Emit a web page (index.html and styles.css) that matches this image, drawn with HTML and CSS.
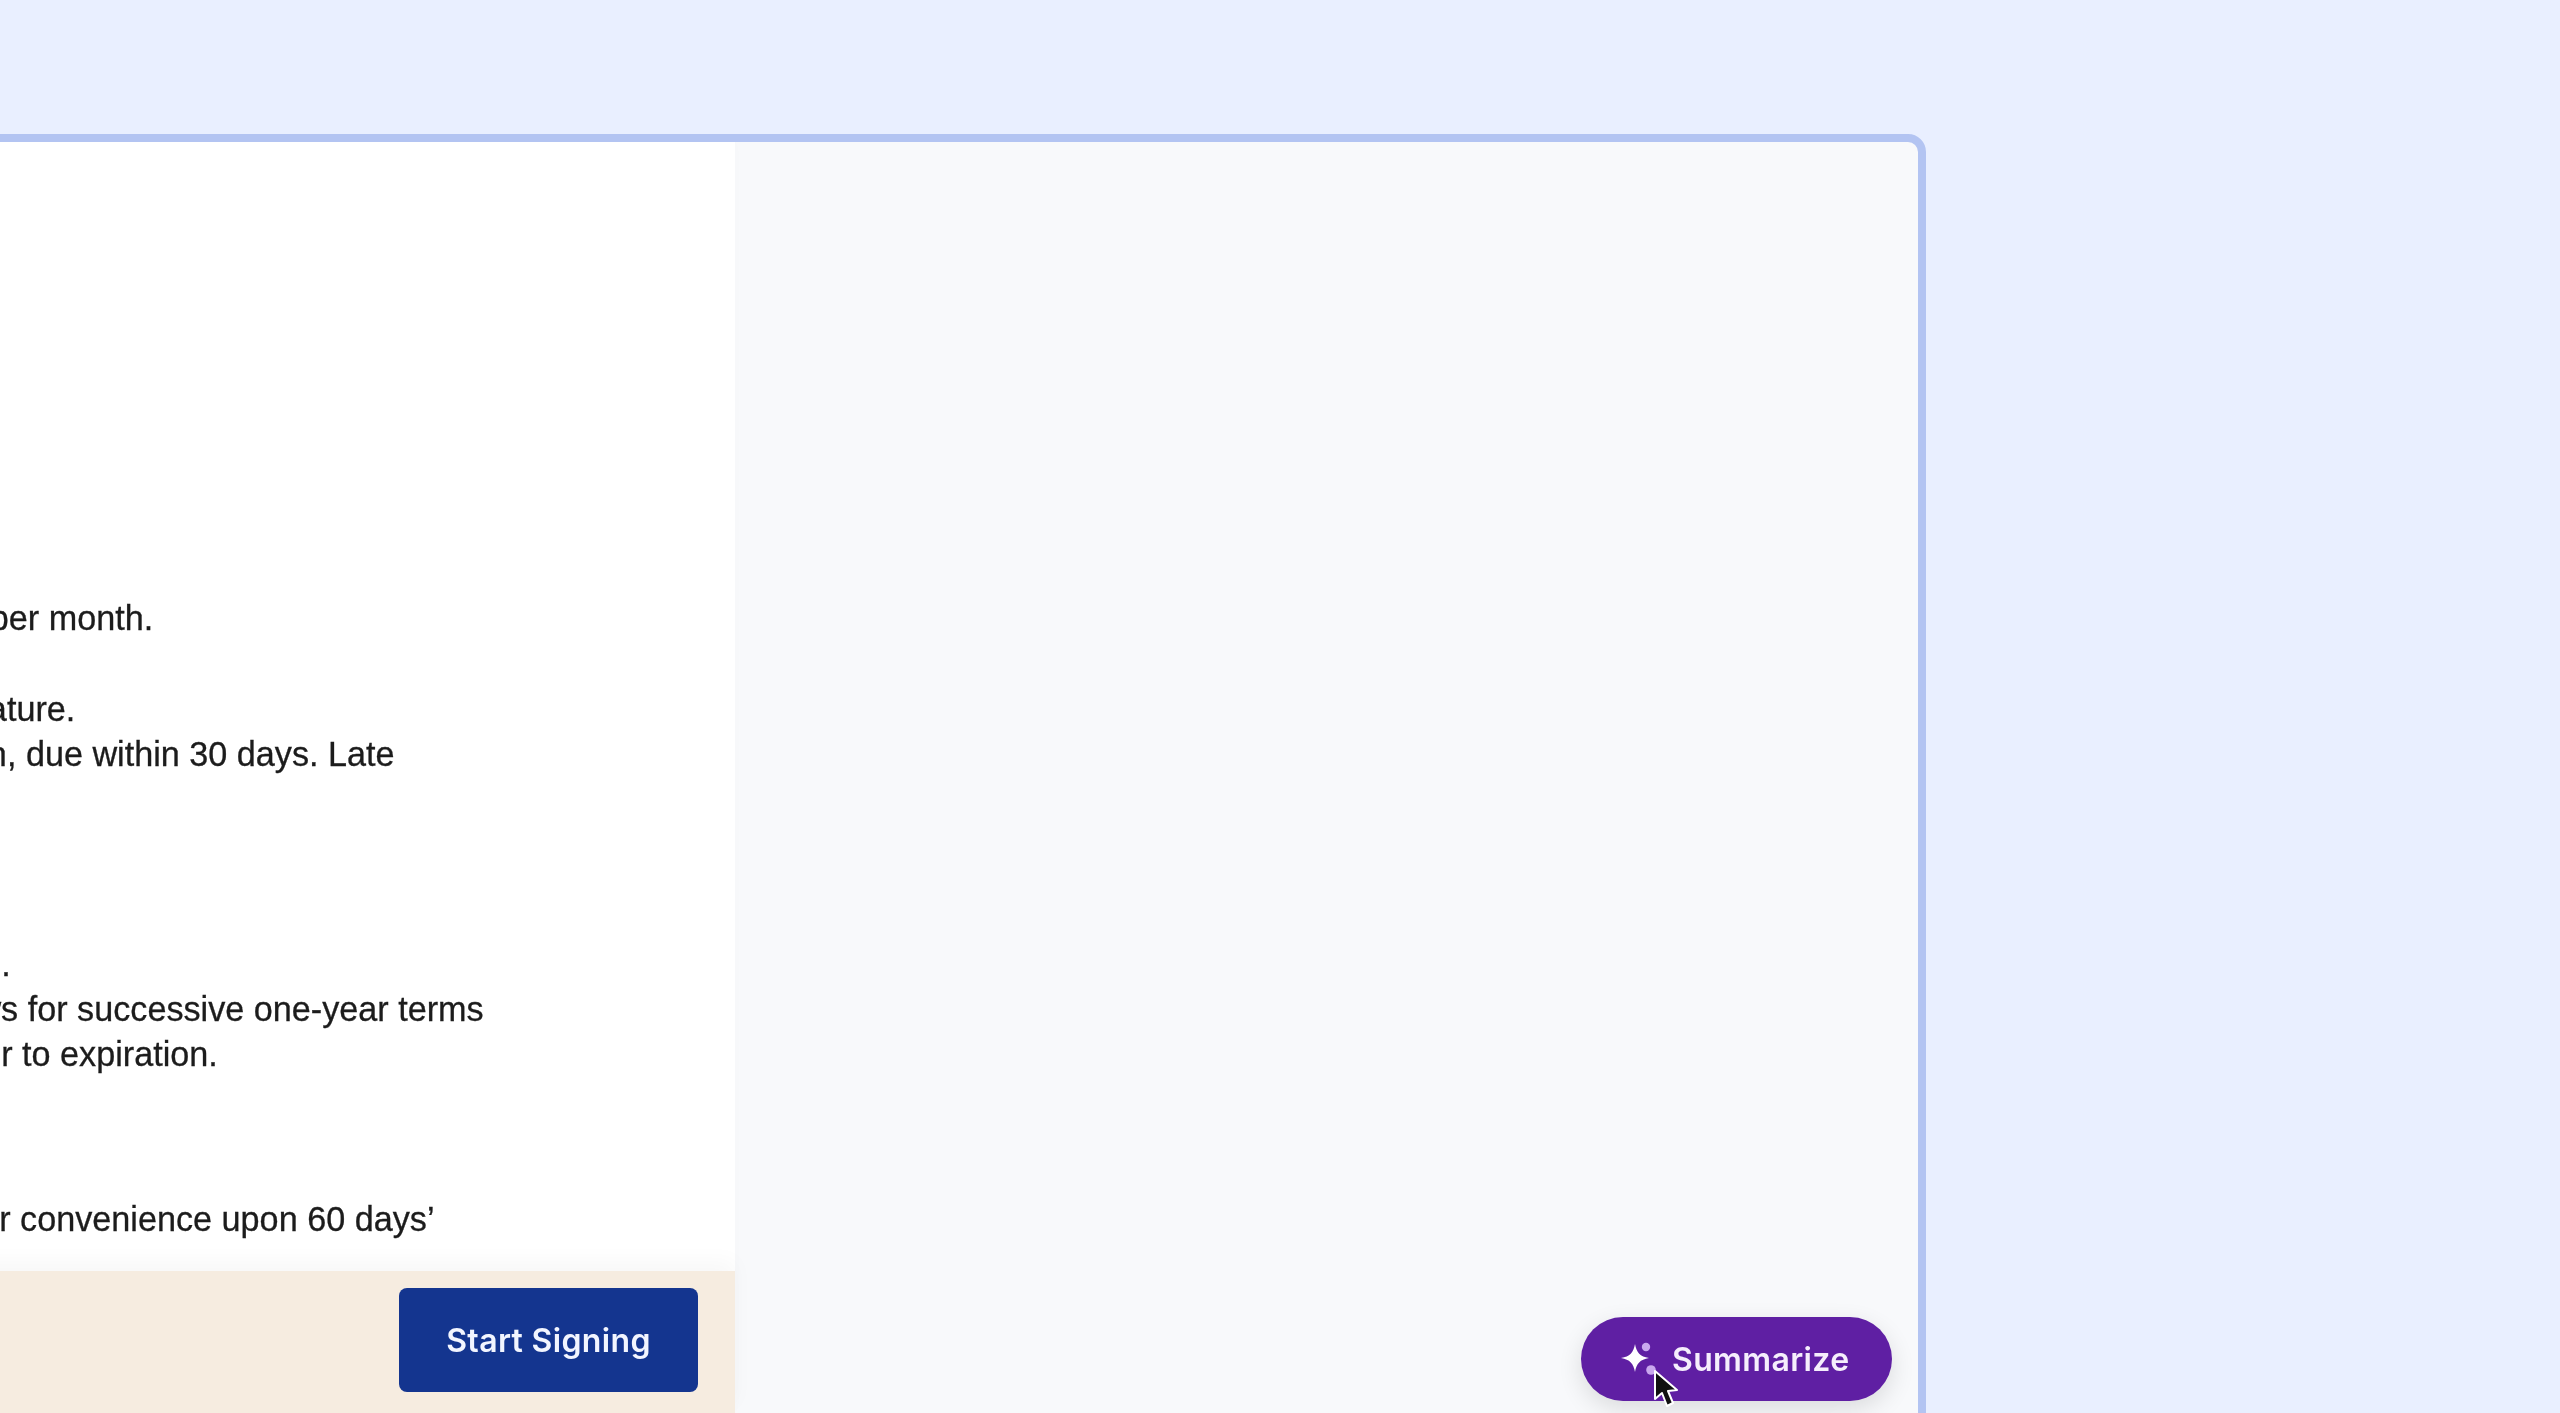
FILE: index.html
```html
<!DOCTYPE html>
<html lang="en">
<head>
<meta charset="utf-8">
<title>Agreement</title>
<link rel="stylesheet" href="styles.css">
</head>
<body>
<main class="window">
  <section class="document">
    <article class="doc-body">
      <p class="clause">Base fees $12,000 per month.</p>
      <p class="clause">Payment upon signature.<br>Invoice on execution, due within 30 days. Late</p>
      <p class="clause gap-lg">Set January 1, 2025.<br>Automatically renews for successive one-year terms<br>notice 120 days prior to expiration.</p>
      <p class="clause gap-xl">Agency terminate for convenience upon 60 days’</p>
    </article>
    <footer class="sign-bar">
      <button class="btn-sign" type="button">Start Signing</button>
    </footer>
  </section>
  <aside class="side-panel">
    <button class="btn-summarize" type="button">
      <svg class="sparkle" viewBox="0 0 44 44" aria-hidden="true">
        <path class="star" d="M20 7C21.5 15.5 25 19.5 34 21C25 22.5 21.5 26.5 20 35C18.5 26.5 15 22.5 6 21C15 19.5 18.5 15.5 20 7Z"/>
        <circle class="dot" cx="31" cy="10" r="4.2"/>
        <circle class="dot" cx="36" cy="33" r="4.8"/>
      </svg>
      <span>Summarize</span>
    </button>
    <svg class="cursor" viewBox="0 0 26 42" aria-hidden="true">
      <path d="M2 2L2 30L9 24L14 37L20 34L15 22L24 21Z"/>
    </svg>
  </aside>
</main>
</body>
</html>
```
FILE: styles.css
```css
* { box-sizing: border-box; }
html, body { height: 100%; }
body {
  margin: 0;
  overflow: hidden;
  background: #e9efff;
  font-family: "Liberation Sans", Arial, sans-serif;
}
.window {
  display: flex;
  width: 2266px;
  height: 1400px;
  margin: 134px 0 0 -340px;
  background: #f8f9fb;
  border: 8px solid #b3c4f2;
  border-radius: 18px;
  overflow: hidden;
  filter: blur(0.7px);
}
.document {
  display: flex;
  flex-direction: column;
  width: 1067px;
  height: 1271px;
  flex: none;
  box-shadow: 0 0 10px rgba(0, 0, 0, 0.015);
}
.doc-body {
  flex: 1;
  background: #fff;
  padding: 454px 0 0 27.2px;
  font-size: 34.2px;
  line-height: 45px;
  color: #1c1c1c;
  -webkit-text-stroke: 0.3px #1c1c1c;
  white-space: nowrap;
  overflow: hidden;
}
.clause { margin: 0 0 46px; }
.gap-lg { margin-top: 165px; }
.gap-xl { margin-top: 120px; }
.sign-bar {
  display: flex;
  justify-content: flex-end;
  align-items: flex-start;
  height: 142px;
  flex: none;
  padding: 17px 37px 0 0;
  background: #f6ece0;
  box-shadow: 0 -10px 20px rgba(0, 0, 0, 0.03);
}
.btn-sign {
  width: 299px;
  height: 104px;
  border: 0;
  border-radius: 8px;
  background: #14358f;
  color: #f2f5ff;
  font: 600 32px "Inter", sans-serif;
  letter-spacing: 0.35px;
}
.side-panel {
  position: relative;
  flex: 1;
}
.btn-summarize {
  position: absolute;
  left: 846px;
  top: 1175px;
  display: flex;
  align-items: center;
  gap: 13px;
  width: 311px;
  height: 84px;
  padding: 0 0 0 34px;
  border: 0;
  border-radius: 42px;
  background: #5f1fa3;
  color: #f5eefc;
  font: 600 32px "Inter", sans-serif;
  letter-spacing: 0.35px;
  box-shadow: 0 8px 24px rgba(0, 0, 0, 0.12);
}
.sparkle { width: 44px; height: 44px; flex: none; }
.star { fill: #fff; }
.dot { fill: #c9a8ee; }
.cursor {
  position: absolute;
  left: 918px;
  top: 1227px;
  width: 26px;
  height: 42px;
}
.cursor path { fill: #111; stroke: #fff; stroke-width: 2; stroke-linejoin: round; }
```
